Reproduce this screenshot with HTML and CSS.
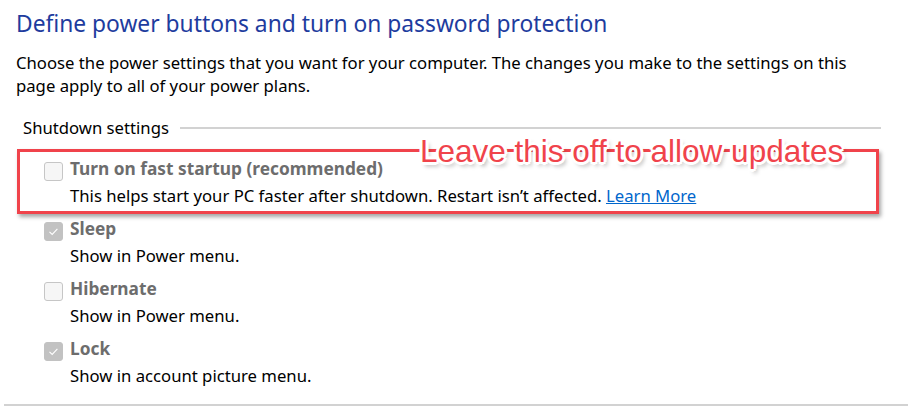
FILE: index.html
```html
<!DOCTYPE html>
<html>
<head>
<meta charset="utf-8">
<link rel="stylesheet" href="styles.css">
</head>
<body>
<div class="page">
  <h1 class="title">Define power buttons and turn on password protection</h1>
  <p class="intro">Choose the power settings that you want for your computer. The changes you make to the settings on this page apply to all of your power plans.</p>
  <div class="group-head">
    <span class="group-label">Shutdown settings</span>
    <span class="group-line"></span>
  </div>
  <div class="callout">
    <div class="option boxed">
      <div class="opt-row"><span class="box"></span><span class="opt-label">Turn on fast startup (recommended)</span></div>
      <div class="opt-desc">This helps start your PC faster after shutdown. Restart isn’t affected. <a class="link" href="#">Learn More</a></div>
    </div>
    <div class="note">Leave this off to allow updates</div>
  </div>
  <div class="option plain">
    <div class="opt-row"><span class="box checked"><svg viewBox="0 0 19 19" width="19" height="19"><path d="M5.5 9.8 L8.2 12.4 L13.4 6.8" fill="none" stroke="#fff" stroke-width="1.1"/></svg></span><span class="opt-label">Sleep</span></div>
    <div class="opt-desc">Show in Power menu.</div>
  </div>
  <div class="option plain">
    <div class="opt-row"><span class="box"></span><span class="opt-label">Hibernate</span></div>
    <div class="opt-desc">Show in Power menu.</div>
  </div>
  <div class="option plain">
    <div class="opt-row"><span class="box checked"><svg viewBox="0 0 19 19" width="19" height="19"><path d="M5.5 9.8 L8.2 12.4 L13.4 6.8" fill="none" stroke="#fff" stroke-width="1.1"/></svg></span><span class="opt-label">Lock</span></div>
    <div class="opt-desc">Show in account picture menu.</div>
  </div>
  <div class="bottom-line"></div>
</div>
</body>
</html>
```

FILE: styles.css
```css
html, body {
  margin: 0;
  padding: 0;
  background: #ffffff;
}
.page {
  width: 908px;
  height: 412px;
  overflow: hidden;
  font-family: "Noto Sans", "Open Sans", sans-serif;
  color: #000;
  position: relative;
}
.title {
  margin: 0;
  padding: 8px 0 0 16px;
  font-size: 22.8px;
  line-height: 32px;
  height: 32px;
  font-weight: normal;
  color: #1e3c9e;
}
.intro {
  margin: 11px 0 0 0;
  padding: 0 30px 0 16px;
  font-size: 16.7px;
  line-height: 23px;
  height: 46px;
}
.group-head {
  display: flex;
  align-items: center;
  margin: 19px 0 0 23px;
  width: 858px;
  height: 24px;
}
.group-label {
  font-size: 16.7px;
  line-height: 24px;
}
.group-line {
  flex: 1;
  margin-left: 11px;
  border-top: 2px solid #d2d2d2;
}
.callout {
  position: relative;
  margin: 9px 0 0 17px;
  width: 856px;
  height: 59px;
  border: 3px solid #f0434b;
  box-shadow: 2px 3px 4px rgba(0,0,0,0.35);
}
.boxed {
  padding: 5px 0 0 24px;
}
.boxed .opt-desc {
  margin-top: 3px;
}
.plain {
  margin-left: 44px;
  height: 60px;
}
.callout + .plain {
  margin-top: 3px;
}
.plain .opt-desc {
  margin-top: 3px;
}
.opt-row {
  display: flex;
  align-items: flex-start;
  height: 24px;
}
.box {
  width: 17px;
  height: 17px;
  margin-top: 5px;
  border: 1px solid #c6c6c6;
  border-radius: 3px;
  background: #f6f6f6;
  box-sizing: content-box;
  display: inline-flex;
  align-items: center;
  justify-content: center;
  margin-right: 7px;
  overflow: hidden;
  flex: none;
}
.box.checked {
  background: #c2c2c2;
  border-color: #c2c2c2;
}
.box svg {
  display: block;
  flex: none;
}
.opt-label {
  font-size: 17.3px;
  font-weight: bold;
  color: #6d6d6d;
  line-height: 24px;
}
.opt-desc {
  padding-left: 26px;
  font-size: 16.7px;
  line-height: 23px;
}
.link {
  color: #0066cc;
  text-decoration: underline;
}
.note {
  position: absolute;
  left: 396px;
  top: -19px;
  padding: 0 4px;
  font-family: "Liberation Sans", Arial, sans-serif;
  font-size: 31.5px;
  line-height: 36px;
  color: #f0434b;
  white-space: nowrap;
  text-shadow:
    2px 0 0 #fff, -2px 0 0 #fff, 0 2px 0 #fff, 0 -2px 0 #fff,
    2px 2px 0 #fff, -2px -2px 0 #fff, 2px -2px 0 #fff, -2px 2px 0 #fff,
    3px 0 0 #fff, -3px 0 0 #fff, 0 3px 0 #fff, 0 -3px 0 #fff,
    3px 4px 4px rgba(0,0,0,0.35);
}
.bottom-line {
  position: absolute;
  left: 4px;
  right: 0;
  top: 404px;
  border-top: 2px solid #d2d2d2;
}
```
